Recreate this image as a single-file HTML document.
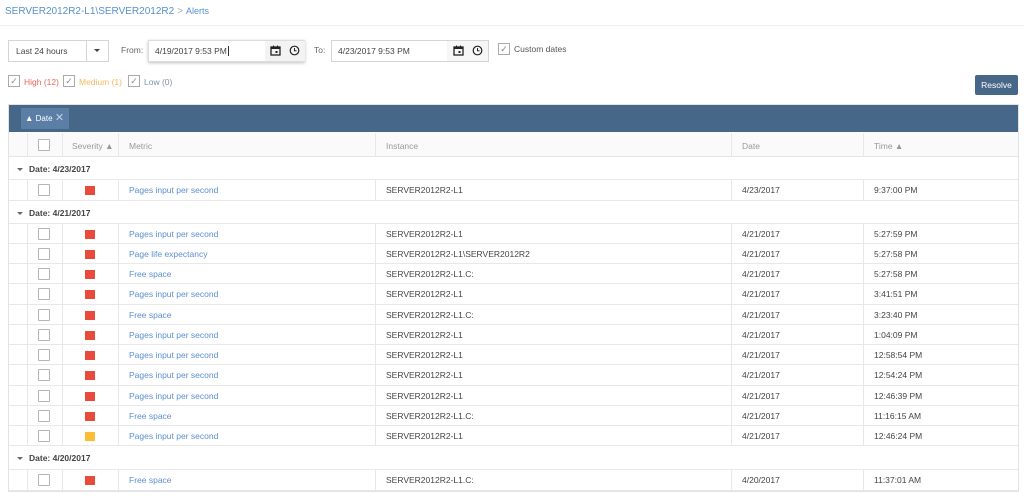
<!DOCTYPE html>
<html><head><style>
*{box-sizing:border-box;margin:0;padding:0}
body{width:1024px;height:496px;background:#fff;font-family:"Liberation Sans",sans-serif;font-size:9px;color:#444;position:relative;overflow:hidden}
.a{position:absolute}
.crumb{left:5px;top:6px;font-size:10px;color:#5a8fcf}
.crumb span{color:#aaa;margin:0 3px}
.crumb b{font-weight:normal;color:#5a8fcf;font-size:9px}
.hr{left:0;top:25px;width:1024px;height:1px;background:#eee}
.box{border:1px solid #d5d5d5;background:#fff}
.cb{width:12px;height:12px;border:1px solid #b5b5b5;background:#fff;border-radius:1px}
.ck{width:12px;height:12px;border:1px solid #aaa;font-size:9px;line-height:10px;text-align:center;color:#888}
.line{background:#e8e8e8}
.txt{font-size:8.5px;white-space:nowrap}
.lnk{color:#5a8fcf}
.grp{font-weight:bold;color:#444}
.sq{width:10px;height:9px;background:#e84a3c}
</style></head><body>
<div class="a crumb">SERVER2012R2-L1\SERVER2012R2<span>&gt;</span><b>Alerts</b></div>
<div class="a hr"></div>

<div class="a box" style="left:8px;top:40px;width:101px;height:22px"></div>
<div class="a" style="left:86px;top:41px;width:1px;height:20px;background:#d5d5d5"></div>
<div class="a txt" style="left:16px;top:46px">Last 24 hours</div>
<div class="a" style="left:94px;top:49px;border-left:3px solid transparent;border-right:3px solid transparent;border-top:3px solid #444"></div>

<div class="a txt" style="left:121px;top:45px;color:#666">From:</div>
<div class="a box" style="left:148px;top:40px;width:157px;height:22px;box-shadow:0 1px 3px rgba(0,0,0,.25);border-color:#ddd"></div>
<div class="a" style="left:265px;top:41px;width:40px;height:20px;background:#f3f3f3"></div>
<div class="a txt" style="left:155px;top:46px">4/19/2017 9:53 PM<span style="border-left:1px solid #333;margin-left:1px"></span></div>

<div class="a txt" style="left:314px;top:45px;color:#666">To:</div>
<div class="a box" style="left:331px;top:40px;width:158px;height:22px"></div>
<div class="a" style="left:447px;top:41px;width:41px;height:20px;background:#f6f6f6"></div>
<div class="a txt" style="left:338px;top:46px">4/23/2017 9:53 PM</div>

<svg class="a" style="left:270px;top:45px" width="11" height="11" viewBox="0 0 11 11"><rect x="1" y="2" width="9" height="8" fill="none" stroke="#222" stroke-width="1.3"/><rect x="1" y="2" width="9" height="2" fill="#222"/><rect x="3" y="0.5" width="1" height="2" fill="#222"/><rect x="7" y="0.5" width="1" height="2" fill="#222"/><rect x="5.5" y="6" width="2" height="2" fill="#222"/></svg>
<svg class="a" style="left:289px;top:45px" width="11" height="11" viewBox="0 0 11 11"><circle cx="5.5" cy="5.5" r="4.3" fill="none" stroke="#222" stroke-width="1.2"/><path d="M5.5 3v2.7h2" fill="none" stroke="#222" stroke-width="1"/></svg>
<svg class="a" style="left:453px;top:45px" width="11" height="11" viewBox="0 0 11 11"><rect x="1" y="2" width="9" height="8" fill="none" stroke="#222" stroke-width="1.3"/><rect x="1" y="2" width="9" height="2" fill="#222"/><rect x="3" y="0.5" width="1" height="2" fill="#222"/><rect x="7" y="0.5" width="1" height="2" fill="#222"/><rect x="5.5" y="6" width="2" height="2" fill="#222"/></svg>
<svg class="a" style="left:472px;top:45px" width="11" height="11" viewBox="0 0 11 11"><circle cx="5.5" cy="5.5" r="4.3" fill="none" stroke="#222" stroke-width="1.2"/><path d="M5.5 3v2.7h2" fill="none" stroke="#222" stroke-width="1"/></svg>

<div class="a ck" style="left:498px;top:43px">&#10003;</div>
<div class="a txt" style="left:514px;top:44px;color:#555">Custom dates</div>

<div class="a ck" style="left:8px;top:75px">&#10003;</div>
<div class="a txt" style="left:24px;top:77px;color:#e8665a">High (12)</div>
<div class="a ck" style="left:63px;top:75px">&#10003;</div>
<div class="a txt" style="left:79px;top:77px;color:#f6b860">Medium (1)</div>
<div class="a ck" style="left:128px;top:75px">&#10003;</div>
<div class="a txt" style="left:144px;top:77px;color:#7f92ad">Low (0)</div>

<div class="a" style="left:975px;top:75px;width:43px;height:20px;background:#476789;border-radius:2px;color:#fff;font-size:8.5px;line-height:20px;text-align:center">Resolve</div>

<div class="a" style="left:8px;top:104px;width:1011px;height:388px;border:1px solid #e3e3e3"></div>
<div class="a" style="left:9px;top:105px;width:1009px;height:27px;background:#476789"></div>
<div class="a" style="left:21px;top:108px;width:48px;height:21px;background:#5a7ea6;color:#fff;font-size:8.5px;line-height:21px;padding-left:4px">&#9650;<span style="font-size:8px"> Date</span> <span style="color:#c5d2e2;font-size:11px">&#10005;</span></div>
<div class="a" style="left:9px;top:132px;width:1009px;height:25px;background:#fafafa;border-bottom:1px solid #e6e6e6"></div>

<div id="t"></div>
<script>
var cols=[27,62,118,375,731,863];
var h='';
function vl(top,height,from){for(var i=from;i<cols.length;i++)h+='<div class="a line" style="left:'+cols[i]+'px;top:'+top+'px;width:1px;height:'+height+'px"></div>';}
vl(133,24,0);
h+='<div class="a cb" style="left:38px;top:139px"></div>';
var hd=[[72,'Severity &#9650;'],[129,'Metric'],[386,'Instance'],[742,'Date'],[874,'Time &#9650;']];
hd.forEach(function(c){h+='<div class="a txt" style="left:'+c[0]+'px;top:141px;color:#999">'+c[1]+'</div>'});
var rows=[
['g','Date: 4/23/2017',157,23],
['r','Pages input per second','SERVER2012R2-L1','4/23/2017','9:37:00 PM',180,21,0],
['g','Date: 4/21/2017',201,23],
['r','Pages input per second','SERVER2012R2-L1','4/21/2017','5:27:59 PM',224,20,0],
['r','Page life expectancy','SERVER2012R2-L1\\SERVER2012R2','4/21/2017','5:27:58 PM',244,20,0],
['r','Free space','SERVER2012R2-L1.C:','4/21/2017','5:27:58 PM',264,20,0],
['r','Pages input per second','SERVER2012R2-L1','4/21/2017','3:41:51 PM',284,21,0],
['r','Free space','SERVER2012R2-L1.C:','4/21/2017','3:23:40 PM',305,20,0],
['r','Pages input per second','SERVER2012R2-L1','4/21/2017','1:04:09 PM',325,20,0],
['r','Pages input per second','SERVER2012R2-L1','4/21/2017','12:58:54 PM',345,20,0],
['r','Pages input per second','SERVER2012R2-L1','4/21/2017','12:54:24 PM',365,21,0],
['r','Pages input per second','SERVER2012R2-L1','4/21/2017','12:46:39 PM',386,20,0],
['r','Free space','SERVER2012R2-L1.C:','4/21/2017','11:16:15 AM',406,20,0],
['r','Pages input per second','SERVER2012R2-L1','4/21/2017','12:46:24 PM',426,20,1],
['g','Date: 4/20/2017',446,24],
['r','Free space','SERVER2012R2-L1.C:','4/20/2017','11:37:01 AM',470,21,0]
];
rows.forEach(function(r){
 if(r[0]=='g'){var t=r[2],hh=r[3];
  h+='<div class="a line" style="left:9px;top:'+(t+hh-1)+'px;width:1009px;height:1px"></div>';
  h+='<div class="a" style="left:17px;top:'+(t+hh/2-1)+'px;border-left:3px solid transparent;border-right:3px solid transparent;border-top:3px solid #666"></div>';
  h+='<div class="a txt grp" style="left:29px;top:'+(t+hh/2-5)+'px">'+r[1]+'</div>';
 }else{var t=r[5],hh=r[6];
  vl(t,hh-1,0);
  h+='<div class="a line" style="left:9px;top:'+(t+hh-1)+'px;width:1009px;height:1px"></div>';
  var m=t+(hh-1)/2;
  h+='<div class="a cb" style="left:38px;top:'+(m-6)+'px"></div>';
  h+='<div class="a sq" style="left:85px;top:'+(m-4)+'px;'+(r[7]?'background:#fbbd35':'')+'"></div>';
  h+='<div class="a txt lnk" style="left:129px;top:'+(m-5)+'px">'+r[1]+'</div>';
  h+='<div class="a txt" style="left:386px;top:'+(m-5)+'px">'+r[2]+'</div>';
  h+='<div class="a txt" style="left:742px;top:'+(m-5)+'px">'+r[3]+'</div>';
  h+='<div class="a txt" style="left:874px;top:'+(m-5)+'px">'+r[4]+'</div>';
 }
});
document.getElementById('t').innerHTML=h;
</script>
</body></html>
